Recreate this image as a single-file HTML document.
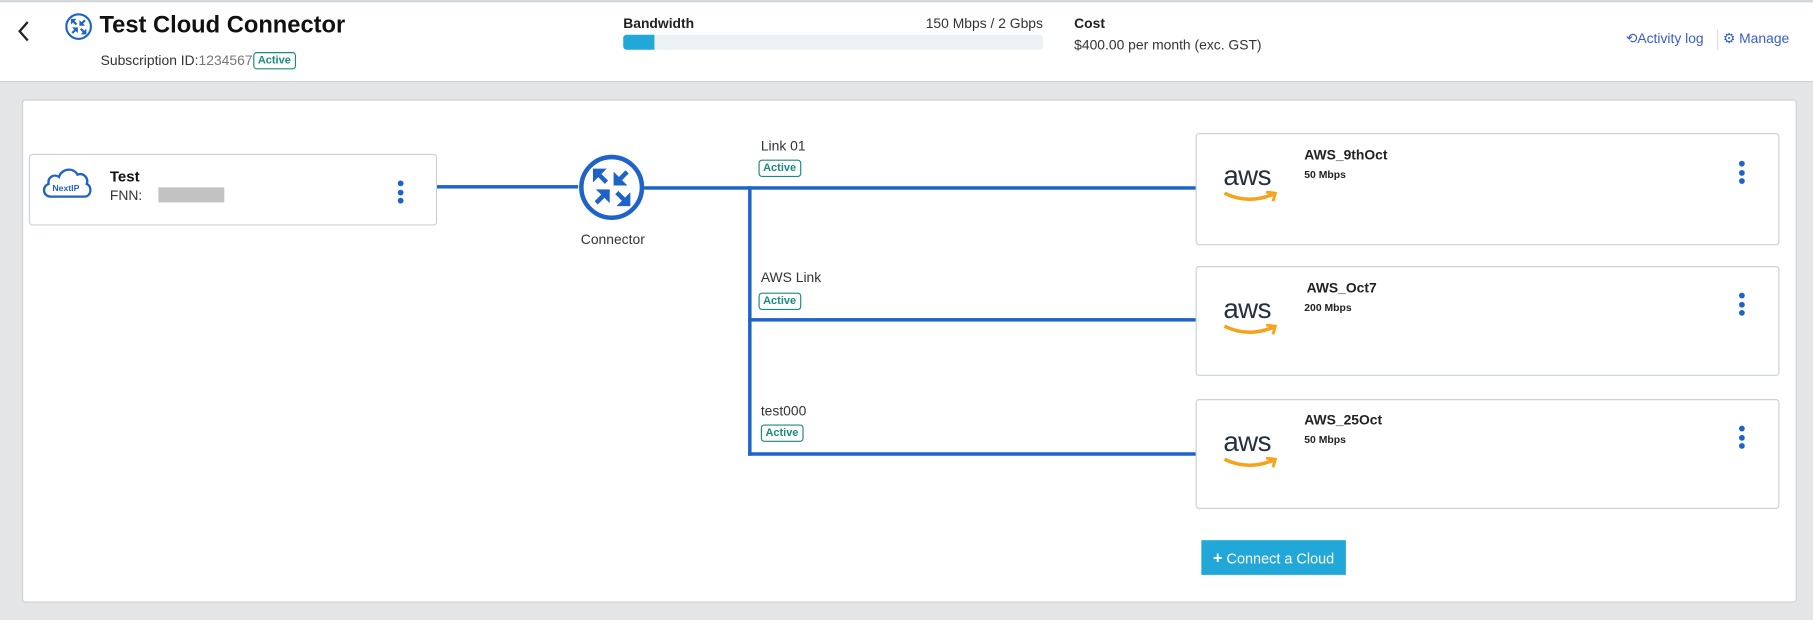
<!DOCTYPE html>
<html><head><meta charset="utf-8"><style>
*{margin:0;padding:0;box-sizing:border-box}
html,body{width:1813px;height:620px;overflow:hidden;background:#e4e5e7;font-family:"Liberation Sans",Arial,sans-serif}
#w{position:absolute;left:0;top:0;width:1568px;height:536px;transform:scale(1.15625,1.1567);transform-origin:0 0;background:#e4e5e7}
.a{position:absolute}
.hdr{left:0;top:0;width:1568px;height:71px;background:#fff;border-top:2px solid #d3d7dc;border-bottom:1px solid #cfd2d6}
.badge{position:absolute;border:1px solid #1b8a7e;color:#1b8a7e;border-radius:3px;font-size:9.5px;font-weight:bold;height:15px;line-height:13px;padding:0 3px}
.card{position:absolute;background:#fff;border:1px solid #ccd0d4;border-radius:3px}
.ln{position:absolute;background:#1e63c8}
.dots{position:absolute;width:5px}
.dots i{display:block;width:5px;height:5px;border-radius:50%;background:#1e63c8;margin-bottom:2.5px}
.aws{position:absolute;font-size:24px;color:#252f3e;font-family:"Liberation Sans",sans-serif;letter-spacing:-0.5px}
.nm{position:absolute;font-size:12px;font-weight:bold;color:#222}
.sp{position:absolute;font-size:9px;font-weight:bold;color:#222}
</style></head><body><div id="w">
<div class="a hdr"></div>
<svg class="a" style="left:13px;top:17px" width="16" height="20" viewBox="0 0 16 20"><path d="M11 2 L4 10 L11 18" fill="none" stroke="#222" stroke-width="2"/></svg>
<svg class="a" style="left:56px;top:11px" width="24" height="24" viewBox="0 0 52 52"><circle cx="26" cy="26" r="23" fill="none" stroke="#1e63c8" stroke-width="4"/><g stroke="#1e63c8" stroke-width="4" fill="#1e63c8"><path d="M22 22 L15 15 M38 14 L31 21 M14 38 L21 31 M30 30 L37 37"/><path d="M12 12 L21 12 L12 21Z M28 24 L28 15 L37 24Z M24 28 L15 28 L24 37Z M40 40 L31 40 L40 31Z" stroke-width="1"/></g></svg>
<div class="a" style="left:86px;top:10px;font-size:20.5px;font-weight:bold;color:#111">Test Cloud Connector</div>
<div class="a" style="left:87px;top:45px;font-size:12px;color:#333">Subscription ID:<span style="color:#777">1234567</span></div>
<div class="badge" style="left:219px;top:45px">Active</div>
<div class="a" style="left:539px;top:13px;font-size:12px;font-weight:bold;color:#222">Bandwidth</div>
<div class="a" style="left:760px;top:13px;width:142px;text-align:right;font-size:12px;color:#333">150 Mbps / 2 Gbps</div>
<div class="a" style="left:539px;top:30px;width:363px;height:13px;background:#eef1f4;border-radius:3px"></div>
<div class="a" style="left:539px;top:30px;width:27px;height:13px;background:#22a8d8;border-radius:3px 0 0 3px"></div>
<div class="a" style="left:929px;top:13px;font-size:12px;font-weight:bold;color:#222">Cost</div>
<div class="a" style="left:929px;top:32px;font-size:12px;color:#333">$400.00 per month (exc. GST)</div>
<div class="a" style="left:1406px;top:26px;font-size:12px;color:#3a5cc8">&#x27F2;Activity log</div>
<div class="a" style="left:1485px;top:25px;width:1px;height:18px;background:#ddd"></div>
<div class="a" style="left:1490px;top:26px;font-size:12px;color:#3a5cc8">&#x2699; Manage</div>

<div class="a" style="left:19px;top:86px;width:1535px;height:435px;background:#fff;border:1px solid #cdd0d4;border-radius:3px"></div>

<div class="card" style="left:25px;top:133px;width:353px;height:62px"></div>
<svg class="a" style="left:35px;top:142px" width="46" height="31" viewBox="0 0 46 31"><path d="M9 28 C2 28 1 19 7 17 C6 11 12 8 16 11 C18 4 28 2 32 9 C37 7 42 12 40 17 C45 19 44 28 38 28 Z" fill="#fff" stroke="#1e63c8" stroke-width="2"/><text x="22" y="23" font-size="7.5" font-weight="bold" fill="#1e63c8" text-anchor="middle" font-family="Liberation Sans">NextIP</text></svg>
<div class="a" style="left:95px;top:145px;font-size:13px;font-weight:bold;color:#111">Test</div>
<div class="a" style="left:95px;top:162px;font-size:12px;color:#333">FNN:</div>
<div class="a" style="left:137px;top:162px;width:57px;height:13px;background:#c2c2c2"></div>
<div class="dots" style="left:344px;top:156px"><i></i><i></i><i></i></div>

<div class="ln" style="left:378px;top:160px;width:122px;height:3px"></div>
<svg class="a" style="left:500px;top:133px" width="58" height="58" viewBox="0 0 52 52"><circle cx="26" cy="26" r="23.5" fill="#fff" stroke="#1e63c8" stroke-width="3.5"/><g stroke="#1e63c8" stroke-width="3.5" fill="#1e63c8"><path d="M22 22 L15 15 M38 14 L31 21 M14 38 L21 31 M30 30 L37 37"/><path d="M12 12 L21 12 L12 21Z M28 24 L28 15 L37 24Z M24 28 L15 28 L24 37Z M40 40 L31 40 L40 31Z" stroke-width="1"/></g></svg>
<div class="a" style="left:490px;top:200px;width:80px;text-align:center;font-size:12px;color:#333">Connector</div>
<div class="ln" style="left:557px;top:161px;width:478px;height:3px"></div>
<div class="ln" style="left:647px;top:161px;width:3px;height:233px"></div>
<div class="ln" style="left:647px;top:275px;width:388px;height:3px"></div>
<div class="ln" style="left:647px;top:391px;width:388px;height:3px"></div>

<div class="a" style="left:658px;top:119px;font-size:12px;color:#333">Link 01</div>
<div class="badge" style="left:656px;top:138px">Active</div>
<div class="a" style="left:658px;top:233px;font-size:12px;color:#333">AWS Link</div>
<div class="badge" style="left:656px;top:253px">Active</div>
<div class="a" style="left:658px;top:348px;font-size:12px;color:#333">test000</div>
<div class="badge" style="left:658px;top:367px">Active</div>

<div class="card" style="left:1034px;top:115px;width:505px;height:97px"></div>
<div class="card" style="left:1034px;top:230px;width:505px;height:95px"></div>
<div class="card" style="left:1034px;top:345px;width:505px;height:95px"></div>

<div class="aws" style="left:1058px;top:139px">aws</div>
<div class="aws" style="left:1058px;top:254px">aws</div>
<div class="aws" style="left:1058px;top:369px">aws</div>
<svg class="a" style="left:1057px;top:165px" width="50" height="12" viewBox="0 0 50 12"><path d="M2 2 Q22 12 44 3" fill="none" stroke="#f7a21b" stroke-width="3"/><path d="M38 1 L46 2 L44 9" fill="none" stroke="#f7a21b" stroke-width="2.5"/></svg>
<svg class="a" style="left:1057px;top:280px" width="50" height="12" viewBox="0 0 50 12"><path d="M2 2 Q22 12 44 3" fill="none" stroke="#f7a21b" stroke-width="3"/><path d="M38 1 L46 2 L44 9" fill="none" stroke="#f7a21b" stroke-width="2.5"/></svg>
<svg class="a" style="left:1057px;top:395px" width="50" height="12" viewBox="0 0 50 12"><path d="M2 2 Q22 12 44 3" fill="none" stroke="#f7a21b" stroke-width="3"/><path d="M38 1 L46 2 L44 9" fill="none" stroke="#f7a21b" stroke-width="2.5"/></svg>

<div class="nm" style="left:1128px;top:127px">AWS_9thOct</div>
<div class="sp" style="left:1128px;top:146px">50 Mbps</div>
<div class="nm" style="left:1130px;top:242px">AWS_Oct7</div>
<div class="sp" style="left:1128px;top:261px">200 Mbps</div>
<div class="nm" style="left:1128px;top:356px">AWS_25Oct</div>
<div class="sp" style="left:1128px;top:375px">50 Mbps</div>
<div class="dots" style="left:1504px;top:139px"><i></i><i></i><i></i></div>
<div class="dots" style="left:1504px;top:253px"><i></i><i></i><i></i></div>
<div class="dots" style="left:1504px;top:368px"><i></i><i></i><i></i></div>

<div class="a" style="left:1039px;top:467px;width:125px;height:30px;background:#22a8d8;color:#fff;font-size:12.5px;line-height:30px;text-align:center"><b style="font-size:14px">+</b> Connect a Cloud</div>
</div></body></html>
